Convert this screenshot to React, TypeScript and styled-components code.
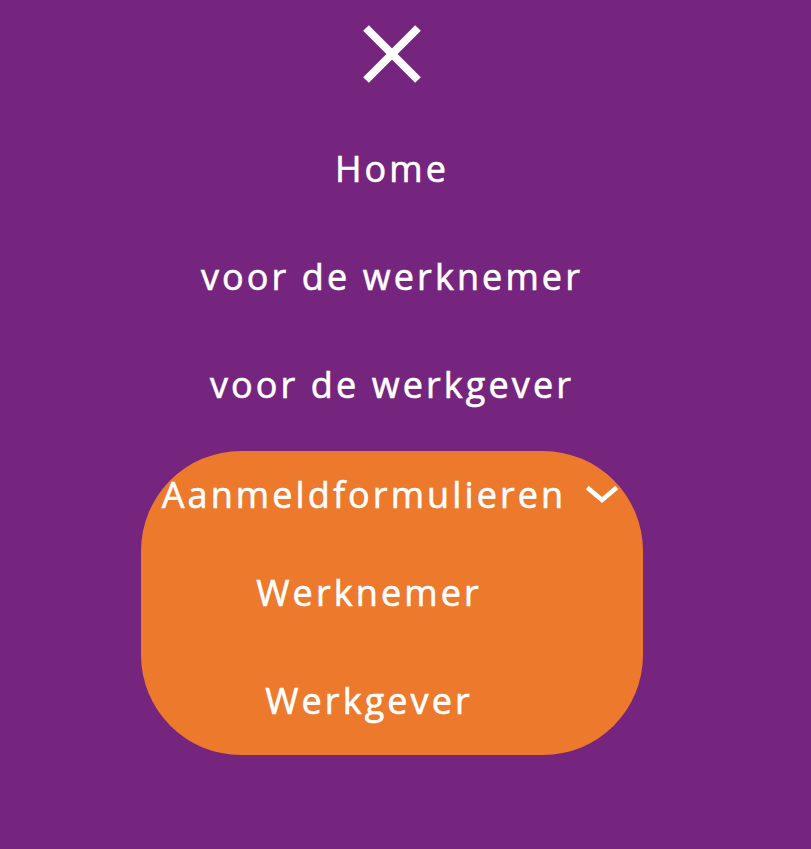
import React from "react";
import styled, { createGlobalStyle } from "styled-components";

const Global = createGlobalStyle`
  html, body { margin: 0; padding: 0; background: #76257f; }
  body { font-family: "Open Sans", "Noto Sans", sans-serif; }
  * { box-sizing: border-box; }
`;

const Overlay = styled.div`
  min-height: 849px;
  background: #76257f;
  width: 784px;
  display: flex;
  flex-direction: column;
  align-items: center;
`;

const CloseButton = styled.button`
  margin-top: 25px;
  width: 58px;
  height: 58px;
  padding: 0;
  border: none;
  background: transparent;
  display: flex;
  align-items: center;
  justify-content: center;
  cursor: pointer;
`;

const NavList = styled.ul`
  list-style: none;
  margin: 62px 0 0;
  padding: 0;
  display: flex;
  flex-direction: column;
  align-items: center;
  width: 100%;
`;

const NavItem = styled.li<{ $last?: boolean }>`
  padding-bottom: ${(p) => (p.$last ? "42px" : "60px")};
  display: flex;
  justify-content: center;
`;

const NavLink = styled.a`
  color: #ffffff;
  font-size: 36px;
  font-weight: 400;
  -webkit-text-stroke: 0.6px #ffffff;
  line-height: 48px;
  letter-spacing: 3.1px;
  text-decoration: none;
  white-space: nowrap;
`;

const DropdownPanel = styled.li`
  width: 502px;
  height: 304px;
  background: #ec792c;
  border-radius: 100px;
  padding: 20px 0 0;
  display: flex;
  flex-direction: column;
  align-items: center;
`;

const DropdownHeader = styled.div`
  display: flex;
  align-items: center;
  gap: 20px;
  margin-right: 4px;
`;

const SubList = styled.ul`
  list-style: none;
  margin: 50px 0 0;
  padding: 0 46px 0 0;
  width: 100%;
  display: flex;
  flex-direction: column;
  align-items: center;
  gap: 60px;
`;

const SubItem = styled.li`
  display: flex;
  justify-content: center;
`;

export default function App() {
  return (
    <>
      <Global />
      <Overlay>
        <CloseButton aria-label="Sluiten">
          <svg width="58" height="58" viewBox="0 0 58 58">
            <path d="M3 3 L55 55 M55 3 L3 55" stroke="#fff" strokeWidth="8" strokeLinecap="butt" />
          </svg>
        </CloseButton>
        <NavList>
          <NavItem><NavLink href="#">Home</NavLink></NavItem>
          <NavItem><NavLink href="#">voor de werknemer</NavLink></NavItem>
          <NavItem $last><NavLink href="#">voor de werkgever</NavLink></NavItem>
          <DropdownPanel>
            <DropdownHeader>
              <NavLink href="#">Aanmeldformulieren</NavLink>
              <svg width="32" height="18" viewBox="0 0 32 18">
                <path d="M3 3 L16 14 L29 3" fill="none" stroke="#fff" strokeWidth="4.5" strokeLinecap="square" />
              </svg>
            </DropdownHeader>
            <SubList>
              <SubItem><NavLink href="#">Werknemer</NavLink></SubItem>
              <SubItem><NavLink href="#">Werkgever</NavLink></SubItem>
            </SubList>
          </DropdownPanel>
        </NavList>
      </Overlay>
    </>
  );
}
